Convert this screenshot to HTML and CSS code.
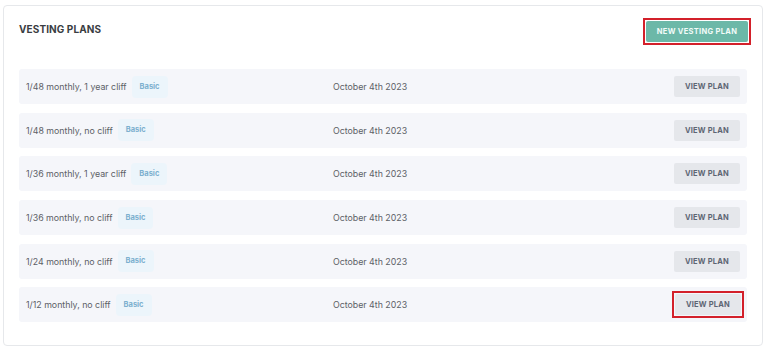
FILE: index.html
```html
<!DOCTYPE html>
<html lang="en">
<head>
    <meta charset="UTF-8">
    <title>Vesting Plans</title>
    <link rel="stylesheet" href="styles.css">
</head>
<body>
    <div class="card">
        <div class="card-head">
            <h1>Vesting Plans</h1>
            <span class="highlight">
                <button class="btn-new">New Vesting Plan</button>
            </span>
        </div>
        <div class="plans">
            <div class="plan">
                <div class="plan-name">1/48 monthly, 1 year cliff <span class="badge">Basic</span></div>
                <div class="plan-date">October 4th 2023</div>
                <div class="plan-action"><button class="btn-view">View Plan</button></div>
            </div>
            <div class="plan">
                <div class="plan-name">1/48 monthly, no cliff <span class="badge">Basic</span></div>
                <div class="plan-date">October 4th 2023</div>
                <div class="plan-action"><button class="btn-view">View Plan</button></div>
            </div>
            <div class="plan">
                <div class="plan-name">1/36 monthly, 1 year cliff <span class="badge">Basic</span></div>
                <div class="plan-date">October 4th 2023</div>
                <div class="plan-action"><button class="btn-view">View Plan</button></div>
            </div>
            <div class="plan">
                <div class="plan-name">1/36 monthly, no cliff <span class="badge">Basic</span></div>
                <div class="plan-date">October 4th 2023</div>
                <div class="plan-action"><button class="btn-view">View Plan</button></div>
            </div>
            <div class="plan">
                <div class="plan-name">1/24 monthly, no cliff <span class="badge">Basic</span></div>
                <div class="plan-date">October 4th 2023</div>
                <div class="plan-action"><button class="btn-view">View Plan</button></div>
            </div>
            <div class="plan">
                <div class="plan-name">1/12 monthly, no cliff <span class="badge">Basic</span></div>
                <div class="plan-date">October 4th 2023</div>
                <div class="plan-action">
                    <span class="highlight"><button class="btn-view">View Plan</button></span>
                </div>
            </div>
        </div>
    </div>
</body>
</html>
```

FILE: styles.css
```css
body {
    margin: 0;
    padding: 5px 5px 5px 3px;
    background-color: #ffffff;
    font-family: Inter, 'Noto Sans', sans-serif;
    color: #5c6066;
}
.card {
    border: 1px solid #e6e8eb;
    border-radius: 4px;
    padding: 0 15px 0 15px;
    height: 341px;
    box-sizing: border-box;
}
.card-head {
    display: flex;
    justify-content: space-between;
    align-items: flex-start;
    height: 63px;
}
h1 {
    margin: 17px 0 0 0;
    font-size: 10px;
    line-height: 12px;
    font-weight: 700;
    text-transform: uppercase;
    letter-spacing: 0.1px;
    color: #3a3d42;
}
.highlight {
    display: inline-block;
    border: 2px solid #d3202a;
    padding: 1px;
    line-height: 0;
}
.card-head .highlight {
    margin-top: 12px;
    margin-right: -4px;
}
.btn-new {
    background-color: #6cb8a8;
    color: #f2fbf8;
    border: none;
    border-radius: 2px;
    height: 21px;
    width: 102px;
    font-family: inherit;
    font-size: 7.5px;
    font-weight: 700;
    letter-spacing: 0.3px;
    text-transform: uppercase;
    padding: 0;
}
.plans {
    display: flex;
    flex-direction: column;
    gap: 8.7px;
}
.plan {
    display: grid;
    grid-template-columns: 307px 1fr auto;
    align-items: center;
    height: 35px;
    padding: 0 7px;
    background-color: #f5f6fa;
    border-radius: 3px;
    font-size: 8.8px;
}
.plan-name {
    display: flex;
    align-items: center;
    gap: 5px;
}
.badge {
    display: inline-block;
    background-color: #ecf5fb;
    color: #7cb0cf;
    font-size: 7.5px;
    font-weight: 700;
    line-height: 22px;
    padding: 0 8px;
    border-radius: 4px;
}
.plan-action {
    display: flex;
    align-items: center;
}
.btn-view {
    background-color: #e5e7eb;
    color: #5d6673;
    border: none;
    border-radius: 2px;
    height: 21px;
    width: 66px;
    font-family: inherit;
    font-size: 7.5px;
    font-weight: 700;
    letter-spacing: 0.2px;
    text-transform: uppercase;
    padding: 0;
}
.plan-action .highlight {
    margin-right: -4px;
}
```
